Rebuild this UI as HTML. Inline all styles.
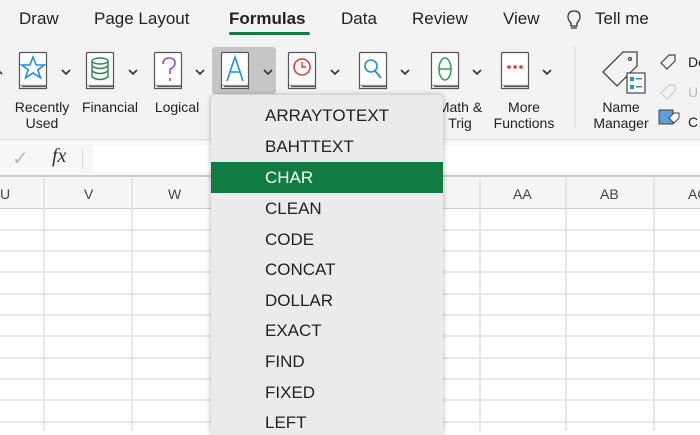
<!DOCTYPE html>
<html><head><style>
body{margin:0;width:700px;height:431px;overflow:hidden;background:#fff;font-family:"Liberation Sans",sans-serif;position:relative}
.a{position:absolute}
.tab{position:absolute;top:9px;font-size:17px;color:#222}
.lbl{position:absolute;font-size:14px;color:#222;text-align:center;line-height:16px}
.mi{position:absolute;left:265px;font-size:17px;color:#222}
</style></head><body>
<div class="a" style="left:0;top:0;width:700px;height:140px;background:#f3f3f3"></div>
<div class="tab" style="left:19px">Draw</div>
<div class="tab" style="left:94px">Page Layout</div>
<div class="tab" style="left:229px;font-weight:bold">Formulas</div>
<div class="a" style="left:229px;top:32px;width:81px;height:3px;background:#107c41;border-radius:2px"></div>
<div class="tab" style="left:341px">Data</div>
<div class="tab" style="left:412px">Review</div>
<div class="tab" style="left:503px">View</div>
<div class="tab" style="left:595px">Tell me</div>
<div class="a" style="left:212px;top:47px;width:64px;height:47px;background:#c6c6c6;border-radius:3px"></div>
<svg class="a" style="left:0;top:0" width="700" height="140">
<defs><g id="bk"><rect x="0.5" y="0.5" width="27" height="33" fill="#fff" stroke="#555" stroke-width="1.2" rx="1"/><path d="M0.5 33.5 v3 h27 v-3 M3 34.5 h24" fill="#fff" stroke="#555" stroke-width="1.2"/></g></defs>
<use href="#bk" x="19" y="52"/><use href="#bk" x="86" y="52"/><use href="#bk" x="154" y="52"/><use href="#bk" x="221" y="52"/><use href="#bk" x="288" y="52"/><use href="#bk" x="359" y="52"/><use href="#bk" x="431" y="52"/><use href="#bk" x="501" y="52"/>
<path d="M33 57 l3.2 8 h8 l-6.4 4.8 l2.6 8 l-7.4 -4.8 l-7.4 4.8 l2.6 -8 l-6.4 -4.8 h8z" fill="none" stroke="#1e8fe0" stroke-width="1.6"/>
<g fill="none" stroke="#1f8a4a" stroke-width="1.4"><ellipse cx="100" cy="61" rx="8" ry="3"/><path d="M92 61 v16 q8 5 16 0 v-16 M92 66 q8 5 16 0 M92 71 q8 5 16 0"/></g>
<path d="M163 64 q0 -6 6 -6 q6 0 6 5 q0 4 -5 6 v5 M170 78 v3" fill="none" stroke="#a347c9" stroke-width="1.6"/>
<path d="M227 81 l8 -24 l8 24 M230 72 h10" fill="none" stroke="#1e8fe0" stroke-width="1.6"/>
<circle cx="302" cy="67" r="8" fill="none" stroke="#e33" stroke-width="1.5"/><path d="M302 62 v5 h4" fill="none" stroke="#e33" stroke-width="1.4"/>
<circle cx="371" cy="66" r="6" fill="none" stroke="#1e8fe0" stroke-width="1.6"/><path d="M375 71 l6 7" stroke="#1e8fe0" stroke-width="1.8"/>
<ellipse cx="445" cy="69" rx="6" ry="11" fill="none" stroke="#2aa05a" stroke-width="1.5"/><path d="M439 69 h12" stroke="#2aa05a" stroke-width="1.5"/>
<g fill="#e33"><circle cx="509" cy="67" r="1.8"/><circle cx="515" cy="67" r="1.8"/><circle cx="521" cy="67" r="1.8"/></g>
<g fill="none" stroke="#333" stroke-width="1.6"><path d="M62 70 l4 4 l4 -4 M129 70 l4 4 l4 -4 M196 70 l4 4 l4 -4 M264 70 l4 4 l4 -4 M331 70 l4 4 l4 -4 M401 70 l4 4 l4 -4 M473 70 l4 4 l4 -4 M543 70 l4 4 l4 -4 M-2 70 l4 4"/></g>
<path d="M575 46 v82" stroke="#ddd" stroke-width="1"/>
<g fill="none" stroke="#444" stroke-width="1.3"><path d="M603 72 l20 -20 h14 v14 l-20 20 z"/><circle cx="630" cy="59" r="1.5"/></g>
<rect x="627" y="73" width="18" height="20" fill="#fff" stroke="#444" stroke-width="1.2"/><g fill="#1e8fe0"><rect x="630" y="77" width="4" height="4"/><rect x="630" y="85" width="4" height="4"/><rect x="636" y="78" width="6" height="1.5"/><rect x="636" y="86" width="6" height="1.5"/></g>
<path d="M661 63 l8 -8 h6 v6 l-8 8 z" fill="none" stroke="#444" stroke-width="1.2"/>
<path d="M661 93 l8 -8 h6 v6 l-8 8 z" fill="none" stroke="#ccc" stroke-width="1.2"/>
<rect x="659" y="110" width="14" height="14" fill="#5aa0e0" stroke="#444"/><path d="M669 118 l5 -5 h5 v5 l-5 5z" fill="#fff" stroke="#444"/>
<path d="M574 11 q-6 0 -6 6 q0 3 3 6 v3 h6 v-3 q3 -3 3 -6 q0 -6 -6 -6 M571 28 h6" fill="none" stroke="#333" stroke-width="1.3"/>
</svg>
<div class="lbl" style="left:-14px;top:99px">n</div>
<div class="lbl" style="left:8px;top:99px;width:68px">Recently<br>Used</div>
<div class="lbl" style="left:78px;top:99px;width:64px">Financial</div>
<div class="lbl" style="left:150px;top:99px;width:54px">Logical</div>
<div class="lbl" style="left:430px;top:99px;width:60px">Math &amp;<br>Trig</div>
<div class="lbl" style="left:488px;top:99px;width:72px">More<br>Functions</div>
<div class="lbl" style="left:584px;top:99px;width:74px">Name<br>Manager</div>
<div class="lbl" style="left:688px;top:54px">De</div>
<div class="lbl" style="left:688px;top:84px;color:#bbb">U</div>
<div class="lbl" style="left:688px;top:114px">C</div>
<div class="a" style="left:0;top:139px;width:700px;height:1px;background:#ddd"></div>
<div class="a" style="left:0;top:140px;width:700px;height:36px;background:#f7f7f7"></div>
<div class="a" style="left:93px;top:145px;width:607px;height:27px;background:#fff"></div>
<div class="a" style="left:12px;top:146px;font-size:20px;color:#bbb">✓</div>
<div class="a" style="left:52px;top:145px;font-size:20px;font-style:italic;font-family:'Liberation Serif',serif;color:#333">fx</div>
<div class="a" style="left:82px;top:149px;width:1px;height:20px;background:#ddd"></div>
<div class="a" style="left:0;top:175px;width:700px;height:2px;background:#ccc"></div>
<div class="a" style="left:0;top:177px;width:700px;height:31px;background:#f5f5f5;border-bottom:1px solid #ccc"></div>
<svg class="a" style="left:0;top:178px" width="700" height="253">
<g stroke="#dcdcdc" stroke-width="1.3">
<path d="M44 0 V253 M132 0 V253 M480 0 V253 M566 0 V253 M654 0 V253"/>
<path d="M0 52 H700 M0 73 H700 M0 94 H700 M0 116 H700 M0 137 H700 M0 158 H700 M0 180 H700 M0 201 H700 M0 222 H700 M0 244 H700"/>
</g>
</svg>
<div class="a" style="left:0;top:186px;font-size:14px;color:#444">U</div>
<div class="a" style="left:84px;top:186px;font-size:14px;color:#444">V</div>
<div class="a" style="left:168px;top:186px;font-size:14px;color:#444">W</div>
<div class="a" style="left:513px;top:186px;font-size:14px;color:#444">AA</div>
<div class="a" style="left:600px;top:186px;font-size:14px;color:#444">AB</div>
<div class="a" style="left:688px;top:186px;font-size:14px;color:#444">AC</div>
<div class="a" style="left:211px;top:95px;width:232px;height:340px;background:#ebebeb;border-radius:5px;box-shadow:0 0 6px rgba(0,0,0,.3)"></div>
<div class="a" style="left:211px;top:162px;width:232px;height:31px;background:#107c41"></div>
<div class="mi" style="top:106px">ARRAYTOTEXT</div>
<div class="mi" style="top:137px">BAHTTEXT</div>
<div class="mi" style="top:168px;color:#fff">CHAR</div>
<div class="mi" style="top:199px">CLEAN</div>
<div class="mi" style="top:230px">CODE</div>
<div class="mi" style="top:260px">CONCAT</div>
<div class="mi" style="top:291px">DOLLAR</div>
<div class="mi" style="top:321px">EXACT</div>
<div class="mi" style="top:352px">FIND</div>
<div class="mi" style="top:383px">FIXED</div>
<div class="mi" style="top:413px">LEFT</div>
</body></html>
